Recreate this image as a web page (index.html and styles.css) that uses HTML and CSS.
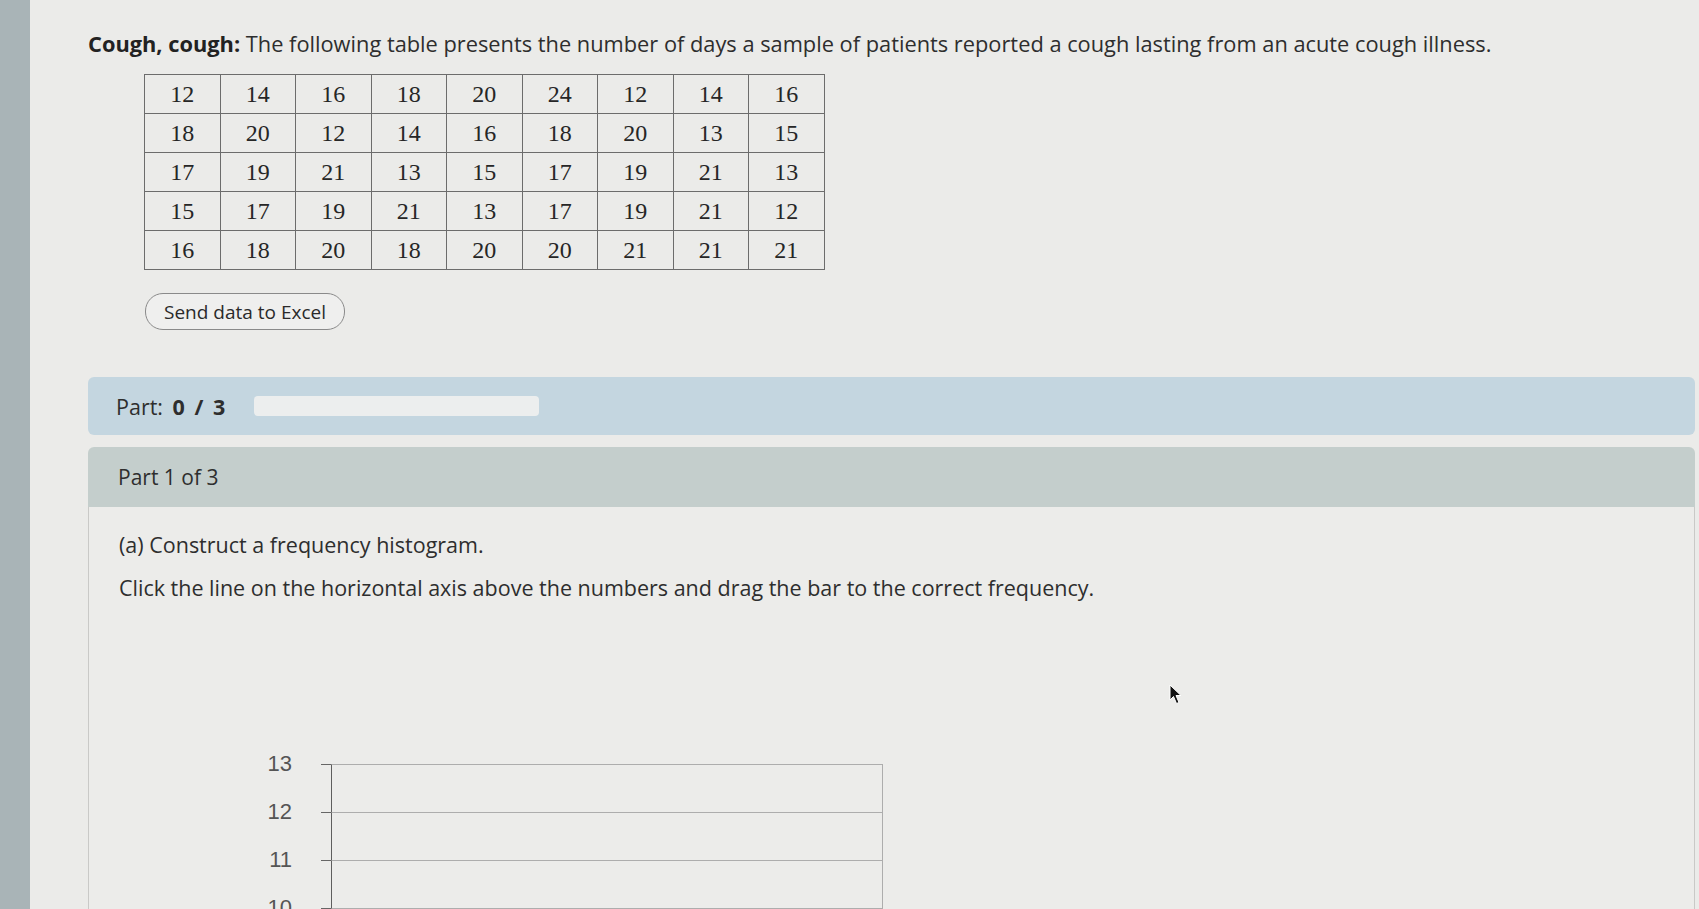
FILE: index.html
```
<!DOCTYPE html>
<html>
<head>
<meta charset="utf-8">
<link rel="stylesheet" href="styles.css">
</head>
<body>
<div class="page">
  <div class="strip"></div>
  <main class="main">
    <p class="intro"><b>Cough, cough:</b> The following table presents the number of days a sample of patients reported a cough lasting from an acute cough illness.</p>
    <table class="data">
      <tr><td>12</td><td>14</td><td>16</td><td>18</td><td>20</td><td>24</td><td>12</td><td>14</td><td>16</td></tr>
      <tr><td>18</td><td>20</td><td>12</td><td>14</td><td>16</td><td>18</td><td>20</td><td>13</td><td>15</td></tr>
      <tr><td>17</td><td>19</td><td>21</td><td>13</td><td>15</td><td>17</td><td>19</td><td>21</td><td>13</td></tr>
      <tr><td>15</td><td>17</td><td>19</td><td>21</td><td>13</td><td>17</td><td>19</td><td>21</td><td>12</td></tr>
      <tr><td>16</td><td>18</td><td>20</td><td>18</td><td>20</td><td>20</td><td>21</td><td>21</td><td>21</td></tr>
    </table>
    <button class="excel">Send data to Excel</button>

    <div class="partbar">
      <span class="partlabel">Part: <b>0 / 3</b></span>
      <span class="progress"></span>
    </div>

    <section class="panel">
      <div class="panel-head">Part 1 of 3</div>
      <div class="panel-body">
        <p class="q">(a) Construct a frequency histogram.</p>
        <p class="q">Click the line on the horizontal axis above the numbers and drag the bar to the correct frequency.</p>
        <div class="chart">
          <div class="row"><span class="lab">13</span><span class="tick"></span><span class="plot top"></span></div>
          <div class="row"><span class="lab">12</span><span class="tick"></span><span class="plot"></span></div>
          <div class="row"><span class="lab">11</span><span class="tick"></span><span class="plot"></span></div>
          <div class="row"><span class="lab">10</span><span class="tick"></span><span class="plot"></span></div>
        </div>
      </div>
    </section>
  </main>
  <svg class="cursor" width="14" height="21" viewBox="0 0 14 21"><path d="M1 1 L1 16 L4.5 12.5 L7.5 19.5 L10 18.5 L7 11.5 L12 11.5 Z" fill="#111" stroke="#fff" stroke-width="1"/></svg>
</div>
</body>
</html>
```
FILE: styles.css
```
html, body {
  margin: 0;
  padding: 0;
  height: 909px;
  overflow: hidden;
  background: #ebebe9;
}
.page {
  position: relative;
  display: flex;
  height: 909px;
  overflow: hidden;
  font-family: "Open Sans", "DejaVu Sans", sans-serif;
  color: #2e2e2e;
}
.strip {
  width: 30px;
  flex: none;
  background: #a9b4b7;
}
.main {
  flex: 1;
  padding: 30px 4px 0 58px;
  display: flex;
  flex-direction: column;
  align-items: flex-start;
}
.main > * {
  flex-shrink: 0;
}
.intro {
  margin: 0;
  font-size: 21.8px;
  line-height: 28px;
}
.intro b { font-weight: 700; color: #222; }
.data {
  margin: 16px 0 0 56px;
  border-collapse: collapse;
  font-family: "Liberation Serif", "Times New Roman", serif;
  font-size: 24px;
  color: #262626;
}
.data td {
  width: 74.5px;
  height: 38px;
  padding: 0;
  text-align: center;
  border: 1px solid #6c6c6c;
}
.excel {
  margin: 23px 0 0 57px;
  width: 200px;
  height: 37px;
  border: 1px solid #8a8a8a;
  border-radius: 18px;
  background: #efefee;
  font-family: "Open Sans", sans-serif;
  font-size: 19px;
  color: #2a2a2a;
  padding: 0;
}
.partbar {
  margin-top: 47px;
  align-self: stretch;
  height: 58px;
  background: #c4d6e0;
  border-radius: 6px;
  display: flex;
  align-items: center;
  padding-left: 28px;
  gap: 29px;
  font-size: 21.5px;
}
.partlabel b { font-weight: 700; word-spacing: 4px; margin-left: 4px; }
.progress {
  width: 285px;
  height: 20px;
  border-radius: 4px;
  background: #eceeee;
}
.panel {
  margin-top: 12px;
  align-self: stretch;
  flex: 1 0 auto;
  display: flex;
  flex-direction: column;
}
.panel-head {
  flex: none;
  height: 60px;
  background: #c4cecc;
  border-radius: 6px 6px 0 0;
  display: flex;
  align-items: center;
  padding-left: 30px;
  font-size: 21px;
}
.panel-body {
  flex: 1 0 auto;
  border-left: 1px solid #c9c9c7;
  border-right: 1px solid #c9c9c7;
  background: #ececea;
  padding: 24px 0 0 30px;
}
.q {
  margin: 0 0 15px 0;
  font-size: 21.5px;
  line-height: 28px;
}
.chart {
  margin: 162px 0 0 128px;
}
.row {
  display: flex;
  height: 48px;
}
.lab {
  width: 45px;
  text-align: right;
  font-family: "Liberation Sans", Arial, sans-serif;
  font-size: 22px;
  line-height: 26px;
  margin-top: -13px;
  color: #555;
}
.tick {
  width: 10px;
  margin-left: 29px;
  border-top: 1px solid #666;
}
.plot {
  width: 550px;
  border-top: 1px solid #adadad;
  border-left: 1px solid #5e5e5e;
  border-right: 1px solid #adadad;
}
.cursor {
  position: absolute;
  left: 1169px;
  top: 684px;
}
```
